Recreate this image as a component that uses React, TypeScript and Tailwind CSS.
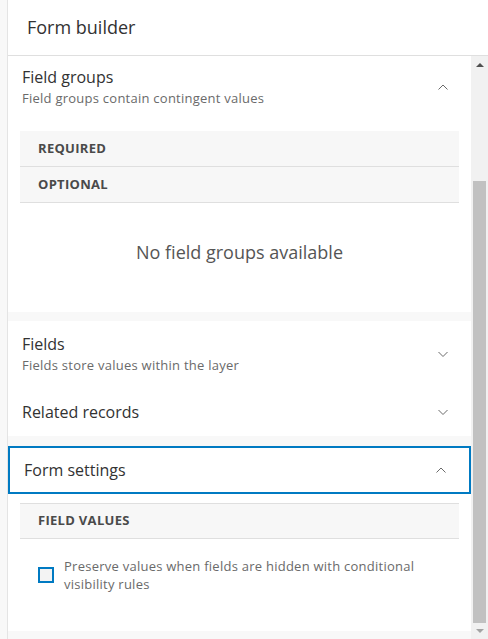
import React from 'react'

const font = { fontFamily: '"Open Sans", "Noto Sans", sans-serif' }

function Chevron({ up }: { up?: boolean }) {
  return (
    <svg width="16" height="16" viewBox="0 0 16 16" className="shrink-0 text-[#6a6a6a]">
      <path
        d={up ? 'M3.5 10.5 L8 6 L12.5 10.5' : 'M3.5 6 L8 10.5 L12.5 6'}
        fill="none"
        stroke="currentColor"
        strokeWidth="1"
      />
    </svg>
  )
}

function SectionHeader({
  title,
  subtitle,
  open,
  className = '',
}: {
  title: string
  subtitle?: string
  open?: boolean
  className?: string
}) {
  return (
    <div className={`flex items-center pl-[14px] pr-[20px] ${className}`}>
      <div className="flex-1 min-w-0">
        <div className="text-[16px] leading-[20px] text-[#323232]">{title}</div>
        {subtitle && (
          <div className="text-[13px] leading-[18px] mt-[2px] tracking-[0.25px] text-[#6a6a6a]">
            {subtitle}
          </div>
        )}
      </div>
      <Chevron up={open} />
    </div>
  )
}

function GroupRow({ label, top }: { label: string; top?: boolean }) {
  return (
    <div
      className={`bg-[#f7f7f7] border-b border-[#dfdfdf] ${top ? 'border-t' : ''} h-[36px] flex items-center px-[18px] text-[13px] font-bold tracking-[0.3px] text-[#4a4a4a]`}
    >
      {label}
    </div>
  )
}

function Scrollbar() {
  return (
    <div className="w-[17px] shrink-0 bg-[#f1f1f1] flex flex-col items-center">
      <div className="h-[17px] w-full flex items-center justify-center">
        <div className="w-0 h-0 border-l-[4px] border-r-[4px] border-b-[4px] border-l-transparent border-r-transparent border-b-[#505050]" />
      </div>
      <div className="h-[108px]" />
      <div className="w-[13px] h-[442px] bg-[#c1c1c1]" />
      <div className="flex-1 w-full flex items-center justify-center">
        <div className="w-0 h-0 border-l-[4px] border-r-[4px] border-t-[4px] border-l-transparent border-r-transparent border-t-[#a3a3a3]" />
      </div>
    </div>
  )
}

export default function App() {
  return (
    <div className="w-[488px] h-[639px] flex bg-[#f8f8f8] overflow-hidden" style={font}>
      {/* Left strip */}
      <div className="w-[8px] shrink-0 bg-[#f8f8f8] border-r border-[#e4e4e4]" />

      <div className="flex-1 flex flex-col min-w-0">
        {/* Panel header */}
        <div className="h-[56px] shrink-0 bg-white border-b border-[#dfdfdf] flex items-center pl-[19px]">
          <span className="text-[18px] text-[#323232]">Form builder</span>
        </div>

        <div className="flex-1 flex min-h-0">
          {/* Scrolled content */}
          <div className="flex-1 min-w-0 overflow-hidden">
            {/* Field groups */}
            <div className="bg-white h-[256px] flex flex-col">
              <SectionHeader
                title="Field groups"
                subtitle="Field groups contain contingent values"
                open
                className="pt-[11px] pb-[12px]"
              />
              <div className="mx-[12px] mt-[12px]">
                <GroupRow label="REQUIRED" />
                <GroupRow label="OPTIONAL" />
              </div>
              <div className="flex-1 flex items-center justify-center pb-[10px]">
                <span className="text-[18px] text-[#555555]">No field groups available</span>
              </div>
            </div>

            {/* Fields + Related records */}
            <div className="bg-white mt-[9px]">
              <SectionHeader
                title="Fields"
                subtitle="Fields store values within the layer"
                className="pt-[13px] pb-[14px]"
              />
              <SectionHeader title="Related records" className="py-[14px]" />
            </div>

            {/* Form settings */}
            <div className="bg-white mt-[10px] pb-[38px]">
              <SectionHeader
                title="Form settings"
                open
                className="h-[48px] border-2 border-[#007ac2] pl-[12px] pr-[18px]"
              />
              <div className="mx-[12px] mt-[9px]">
                <GroupRow label="FIELD VALUES" top />
              </div>
              <div className="flex items-center gap-[10px] pl-[30px] pr-[40px] mt-[18px]">
                <div className="w-[16px] h-[16px] shrink-0 border-2 border-[#007ac2] bg-[#f3f3f3]" />
                <span className="text-[13px] leading-[18px] tracking-[0.25px] text-[#6a6a6a]">
                  Preserve values when fields are hidden with conditional visibility rules
                </span>
              </div>
            </div>
          </div>

          <Scrollbar />
        </div>
      </div>
    </div>
  )
}
